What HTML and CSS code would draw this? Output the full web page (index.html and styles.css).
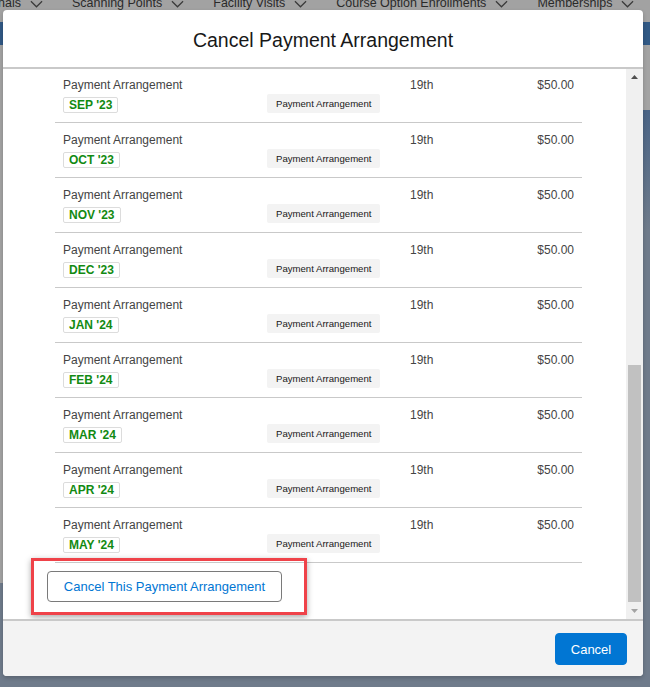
FILE: index.html
```html
<!DOCTYPE html>
<html lang="en">
<head>
<meta charset="utf-8">
<title>Cancel Payment Arrangement</title>
<link rel="stylesheet" href="styles.css">
</head>
<body>
<div class="backdrop">
  <nav class="nav">
    <span class="nav-item">nals <svg class="chev" viewBox="0 0 14 8"><polyline points="1,1 7,7 13,1"/></svg></span>
    <span class="nav-item">Scanning Points <svg class="chev" viewBox="0 0 14 8"><polyline points="1,1 7,7 13,1"/></svg></span>
    <span class="nav-item">Facility Visits <svg class="chev" viewBox="0 0 14 8"><polyline points="1,1 7,7 13,1"/></svg></span>
    <span class="nav-item">Course Option Enrollments <svg class="chev" viewBox="0 0 14 8"><polyline points="1,1 7,7 13,1"/></svg></span>
    <span class="nav-item">Memberships <svg class="chev" viewBox="0 0 14 8"><polyline points="1,1 7,7 13,1"/></svg></span>
  </nav>
  <div class="band"></div>
  <div class="page">
    <div class="page-main"></div>
    <div class="page-side"><div class="side-grey"></div><div class="side-blue"></div></div>
  </div>
</div>

<div class="modal">
  <header class="modal-header">
    <h2 class="modal-title">Cancel Payment Arrangement</h2>
  </header>
  <div class="modal-body">
    <div class="content">
      <div class="list">
        <div class="row"><div class="c1"><div class="label">Payment Arrangement</div><span class="month">SEP '23</span></div><div class="c2"><span class="chip">Payment Arrangement</span></div><div class="c3">19th</div><div class="c4">$50.00</div></div>
        <div class="row"><div class="c1"><div class="label">Payment Arrangement</div><span class="month">OCT '23</span></div><div class="c2"><span class="chip">Payment Arrangement</span></div><div class="c3">19th</div><div class="c4">$50.00</div></div>
        <div class="row"><div class="c1"><div class="label">Payment Arrangement</div><span class="month">NOV '23</span></div><div class="c2"><span class="chip">Payment Arrangement</span></div><div class="c3">19th</div><div class="c4">$50.00</div></div>
        <div class="row"><div class="c1"><div class="label">Payment Arrangement</div><span class="month">DEC '23</span></div><div class="c2"><span class="chip">Payment Arrangement</span></div><div class="c3">19th</div><div class="c4">$50.00</div></div>
        <div class="row"><div class="c1"><div class="label">Payment Arrangement</div><span class="month">JAN '24</span></div><div class="c2"><span class="chip">Payment Arrangement</span></div><div class="c3">19th</div><div class="c4">$50.00</div></div>
        <div class="row"><div class="c1"><div class="label">Payment Arrangement</div><span class="month">FEB '24</span></div><div class="c2"><span class="chip">Payment Arrangement</span></div><div class="c3">19th</div><div class="c4">$50.00</div></div>
        <div class="row"><div class="c1"><div class="label">Payment Arrangement</div><span class="month">MAR '24</span></div><div class="c2"><span class="chip">Payment Arrangement</span></div><div class="c3">19th</div><div class="c4">$50.00</div></div>
        <div class="row"><div class="c1"><div class="label">Payment Arrangement</div><span class="month">APR '24</span></div><div class="c2"><span class="chip">Payment Arrangement</span></div><div class="c3">19th</div><div class="c4">$50.00</div></div>
        <div class="row"><div class="c1"><div class="label">Payment Arrangement</div><span class="month">MAY '24</span></div><div class="c2"><span class="chip">Payment Arrangement</span></div><div class="c3">19th</div><div class="c4">$50.00</div></div>
      </div>
      <div class="action">
        <button class="btn-outline">Cancel This Payment Arrangement</button>
        <div class="highlight"></div>
      </div>
    </div>
    <div class="scrollbar">
      <div class="sb-up"><svg viewBox="0 0 7 4" class="sb-arrow"><polygon points="0,4 3.5,0 7,4"/></svg></div>
      <div class="sb-track"></div>
      <div class="sb-thumb"></div>
      <div class="sb-down"><svg viewBox="0 0 7 4" class="sb-arrow down"><polygon points="0,0 7,0 3.5,4"/></svg></div>
    </div>
  </div>
  <footer class="modal-footer">
    <button class="btn-brand">Cancel</button>
  </footer>
</div>
</body>
</html>
```

FILE: styles.css
```css
* { box-sizing: border-box; }
html, body { margin: 0; padding: 0; }
body {
  width: 650px;
  height: 687px;
  overflow: hidden;
  background: #6f7b8b;
  font-family: "Liberation Sans", Arial, sans-serif;
  position: relative;
}

/* backdrop page */
.backdrop { display: flex; flex-direction: column; }
.nav {
  height: 22px;
  background: #a2a2a2;
  display: flex;
  align-items: flex-start;
  font-size: 12.5px;
  color: #2a2a2a;
  white-space: nowrap;
  overflow: hidden;
}
.nav-item {
  display: flex;
  align-items: center;
  margin-top: -4px;
  line-height: 15px;
  margin-right: 29px;
  flex: none;
}
.nav-item:first-child { margin-left: -2px; }
.chev {
  width: 13px;
  height: 8px;
  margin-left: 9px;
  fill: none;
  stroke: #3a3a3a;
  stroke-width: 1.3;
}
.band { height: 23px; background: #315985; }
.page { display: flex; height: 538px; }
.page-main { flex: 1; background: #a3a3a3; }
.page-side { width: 7px; display: flex; flex-direction: column; }
.side-grey { height: 65px; background: #a3a3a3; }
.side-blue { flex: 1; background: linear-gradient(#4a6486, #6f7b8b 120px); }

/* modal */
.modal {
  position: absolute;
  left: 3px;
  top: 10px;
  width: 640px;
  height: 666px;
  background: #fff;
  border-radius: 4px;
  overflow: hidden;
  display: flex;
  flex-direction: column;
  box-shadow: 0 2px 4px rgba(0,0,0,0.2);
}
.modal-header {
  height: 59px;
  flex: none;
  border-bottom: 2px solid #c9c9c9;
  display: flex;
  align-items: center;
  justify-content: center;
  padding-top: 3px;
}
.modal-title {
  margin: 0;
  font-weight: normal;
  font-size: 19.5px;
  color: #181818;
  line-height: 24px;
}
.modal-body {
  height: 550px;
  flex: none;
  display: flex;
}
.content {
  flex: 1;
  overflow: hidden;
  padding-left: 44px;
  padding-right: 44px;
}
.list { margin-top: -1px; margin-left: 8px; }
.row {
  display: grid;
  grid-template-columns: 204px 143px 1fr auto;
  padding: 10px 8px 9px;
  border-bottom: 1px solid #c9c9c9;
  font-size: 12px;
  line-height: 14px;
  color: #444;
}
.label { height: 14px; }
.month {
  display: inline-block;
  margin-top: 5px;
  height: 16px;
  line-height: 14px;
  padding: 0 5px;
  border: 1px solid #dcdcdc;
  border-radius: 2px;
  color: #128a12;
  font-weight: bold;
  font-size: 12px;
}
.c2 { align-self: end; }
.chip {
  display: inline-block;
  height: 19px;
  line-height: 19px;
  padding: 0 9px;
  background: #f3f3f3;
  border-radius: 2px;
  color: #181818;
  font-size: 9.6px;
}
.c3, .c4 { align-self: start; }
.c4 { text-align: right; }

.action { position: relative; margin-top: 8px; width: 235px; }
.btn-outline {
  display: block;
  width: 235px;
  height: 31px;
  background: #fff;
  border: 1px solid #7a7a7a;
  border-radius: 4px;
  color: #0176d3;
  font-family: "Liberation Sans", Arial, sans-serif;
  font-size: 13px;
  padding: 0;
}
.highlight {
  position: absolute;
  left: -16px;
  top: -13px;
  width: 276px;
  height: 57px;
  border: 3px solid #ef4249;
  box-shadow: 0 2px 6px rgba(0,0,0,0.35);
  pointer-events: none;
}

/* scrollbar */
.scrollbar {
  width: 17px;
  flex: none;
  background: #f0f0f0;
  display: flex;
  flex-direction: column;
  align-items: center;
}
.sb-up { height: 15px; display: flex; align-items: center; justify-content: center; width: 17px; padding-top: 1px; }
.sb-track { flex: 1; }
.sb-thumb { width: 13px; height: 237px; background: #c1c1c1; }
.sb-down { height: 17px; display: flex; align-items: center; justify-content: center; width: 17px; }
.sb-arrow { width: 7px; height: 4px; fill: #505050; }
.sb-arrow.down { fill: #a3a3a3; }

/* footer */
.modal-footer {
  flex: 1;
  background: #f3f3f3;
  border-top: 2px solid #c9c9c9;
  display: flex;
  justify-content: flex-end;
  align-items: flex-start;
  padding: 12px 16px;
}
.btn-brand {
  width: 72px;
  height: 32px;
  background: #0176d3;
  color: #fff;
  border: 1px solid #0176d3;
  border-radius: 4px;
  font-family: "Liberation Sans", Arial, sans-serif;
  font-size: 13px;
  padding: 0;
}
```
